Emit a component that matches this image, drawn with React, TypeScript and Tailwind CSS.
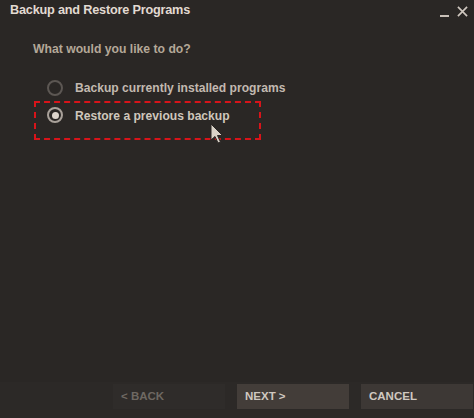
import React from "react";

const font = { fontFamily: '"Liberation Sans", Arial, sans-serif' };

function Cursor() {
  return (
    <svg width="16" height="22" viewBox="0 0 16 22" className="absolute left-[174px] top-[20px]">
      <path d="M1 1 L1 17 L5 13.5 L8 20 L10.5 19 L7.5 12.5 L12.5 12.5 Z" fill="#d9d2c8" stroke="#2a2624" strokeWidth="1" strokeLinejoin="round" />
    </svg>
  );
}

export default function App() {
  return (
    <div className="w-[474px] h-[418px] bg-[#2a2725] flex flex-col overflow-hidden" style={font}>
      <div className="flex items-center justify-between h-[22px] pl-[10px] pr-[6px]">
        <span className="text-[12.7px] font-bold text-[#e2dad2] tracking-[-0.2px]">Backup and Restore Programs</span>
        <div className="flex items-end gap-[8px] text-[#c8c0b8]">
          <div className="w-[9px] h-[2px] bg-[#c8c0b8] mt-[10px]" />
          <svg width="11" height="11" viewBox="0 0 12 12">
            <path d="M1 1 L11 11 M11 1 L1 11" stroke="#d0c8c0" strokeWidth="1.8" />
          </svg>
        </div>
      </div>
      <div className="pl-[33px] pt-[18px]">
        <div className="text-[12.2px] font-bold text-[#b4a898]">What would you like to do?</div>
        <div className="mt-[20px] flex items-center gap-[12px] pl-[14px] h-[20px]">
          <div className="w-[16px] h-[16px] rounded-full border-2 border-[#5c5753] bg-[#2a2725]" />
          <span className="text-[12.1px] font-bold text-[#c2b9b0]">Backup currently installed programs</span>
        </div>
        <div className="mt-[3px] ml-[1px] w-[227px] h-[39px] border-2 border-dashed border-[#d8141a] flex items-start pt-[4px] pl-[11px] gap-[12px] relative">
          <div className="w-[16px] h-[16px] rounded-full border-2 border-[#a9a19a] flex items-center justify-center">
            <div className="w-[7px] h-[7px] rounded-full bg-[#ddd5cc]" />
          </div>
          <span className="text-[12.1px] font-bold text-[#cfc6bc]">Restore a previous backup</span>
          <Cursor />
        </div>
      </div>
      <div className="mt-auto h-[36px] bg-[#2c2927] flex items-start pt-[2px] gap-[12px] pl-[113px]">
        <button className="w-[112px] h-[25px] bg-[#2f2c2a] text-left pl-[8px] text-[11.5px] font-bold text-[#6e6862]">&lt; BACK</button>
        <button className="w-[112px] h-[25px] bg-[#433d39] text-left pl-[8px] text-[11.5px] font-bold text-[#d0c8c0]">NEXT &gt;</button>
        <button className="w-[112px] h-[25px] bg-[#3d3835] text-left pl-[8px] text-[11.5px] font-bold text-[#d0c8c0]">CANCEL</button>
      </div>
    </div>
  );
}
